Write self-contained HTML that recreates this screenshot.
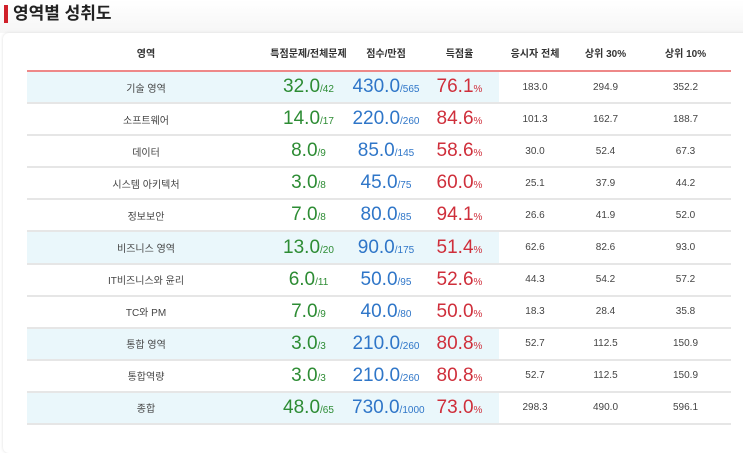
<!DOCTYPE html>
<html><head><meta charset="utf-8"><style>
body{margin:0;width:743px;height:433px;overflow:hidden;background:#fff;font-family:"Liberation Sans","Noto Sans CJK KR",sans-serif;}
.bar{position:absolute;left:4px;top:5px;width:4px;height:18px;background:#d0202a;}
.title{position:absolute;left:13px;top:3px;font-size:17px;font-weight:bold;color:#222;line-height:22px;}
.top{position:absolute;left:0;top:0;width:743px;height:33px;background:linear-gradient(#fff,#f6f6f6);}
.card{position:absolute;left:3px;top:33px;width:750px;height:420px;background:#fff;border-radius:6px;box-shadow:0 0 3px #ddd;}
table{position:absolute;left:27px;top:34px;border-collapse:collapse;table-layout:fixed;width:704px;}
th{height:36px;padding:0;font-size:10px;color:#333;font-weight:bold;border-bottom:2px solid #e88;}
td{height:30.1px;border-bottom:2px solid #e6e6e6;text-align:center;font-size:10px;color:#444;padding:0;}
tr.h td.a{background:#eaf7fb;}
.g{color:#2d8c34;font-size:19px}.b{color:#2f76c8;font-size:19px}.r{color:#cf2f3b;font-size:19px}
small{font-size:10px}
</style></head><body>
<div class="top"></div>
<div class="card"></div>
<div class="bar"></div><div class="title">영역별 성취도</div>
<table>
<colgroup><col style="width:238px"><col style="width:87px"><col style="width:68px"><col style="width:79px"><col style="width:72px"><col style="width:69px"><col style="width:91px"></colgroup>
<tr><th>영역</th><th>특점문제/전체문제</th><th>점수/만점</th><th>득점율</th><th>응시자 전체</th><th>상위 30%</th><th>상위 10%</th></tr>
<tr class="h"><td class="a">기술 영역</td><td class="a"><span class="g">32.0</span><small class="g" style="font-size:10px">/42</small></td><td class="a"><span class="b">430.0</span><small class="b" style="font-size:10px">/565</small></td><td class="a"><span class="r">76.1</span><small class="r" style="font-size:10px">%</small></td><td>183.0</td><td>294.9</td><td>352.2</td></tr>
<tr><td>소프트웨어</td><td><span class="g">14.0</span><small class="g" style="font-size:10px">/17</small></td><td><span class="b">220.0</span><small class="b" style="font-size:10px">/260</small></td><td><span class="r">84.6</span><small class="r" style="font-size:10px">%</small></td><td>101.3</td><td>162.7</td><td>188.7</td></tr>
<tr><td>데이터</td><td><span class="g">8.0</span><small class="g" style="font-size:10px">/9</small></td><td><span class="b">85.0</span><small class="b" style="font-size:10px">/145</small></td><td><span class="r">58.6</span><small class="r" style="font-size:10px">%</small></td><td>30.0</td><td>52.4</td><td>67.3</td></tr>
<tr><td>시스템 아키텍처</td><td><span class="g">3.0</span><small class="g" style="font-size:10px">/8</small></td><td><span class="b">45.0</span><small class="b" style="font-size:10px">/75</small></td><td><span class="r">60.0</span><small class="r" style="font-size:10px">%</small></td><td>25.1</td><td>37.9</td><td>44.2</td></tr>
<tr><td>정보보안</td><td><span class="g">7.0</span><small class="g" style="font-size:10px">/8</small></td><td><span class="b">80.0</span><small class="b" style="font-size:10px">/85</small></td><td><span class="r">94.1</span><small class="r" style="font-size:10px">%</small></td><td>26.6</td><td>41.9</td><td>52.0</td></tr>
<tr class="h"><td class="a">비즈니스 영역</td><td class="a"><span class="g">13.0</span><small class="g" style="font-size:10px">/20</small></td><td class="a"><span class="b">90.0</span><small class="b" style="font-size:10px">/175</small></td><td class="a"><span class="r">51.4</span><small class="r" style="font-size:10px">%</small></td><td>62.6</td><td>82.6</td><td>93.0</td></tr>
<tr><td>IT비즈니스와 윤리</td><td><span class="g">6.0</span><small class="g" style="font-size:10px">/11</small></td><td><span class="b">50.0</span><small class="b" style="font-size:10px">/95</small></td><td><span class="r">52.6</span><small class="r" style="font-size:10px">%</small></td><td>44.3</td><td>54.2</td><td>57.2</td></tr>
<tr><td>TC와 PM</td><td><span class="g">7.0</span><small class="g" style="font-size:10px">/9</small></td><td><span class="b">40.0</span><small class="b" style="font-size:10px">/80</small></td><td><span class="r">50.0</span><small class="r" style="font-size:10px">%</small></td><td>18.3</td><td>28.4</td><td>35.8</td></tr>
<tr class="h"><td class="a">통합 영역</td><td class="a"><span class="g">3.0</span><small class="g" style="font-size:10px">/3</small></td><td class="a"><span class="b">210.0</span><small class="b" style="font-size:10px">/260</small></td><td class="a"><span class="r">80.8</span><small class="r" style="font-size:10px">%</small></td><td>52.7</td><td>112.5</td><td>150.9</td></tr>
<tr><td>통합역량</td><td><span class="g">3.0</span><small class="g" style="font-size:10px">/3</small></td><td><span class="b">210.0</span><small class="b" style="font-size:10px">/260</small></td><td><span class="r">80.8</span><small class="r" style="font-size:10px">%</small></td><td>52.7</td><td>112.5</td><td>150.9</td></tr>
<tr class="h"><td class="a">종합</td><td class="a"><span class="g">48.0</span><small class="g" style="font-size:10px">/65</small></td><td class="a"><span class="b">730.0</span><small class="b" style="font-size:10px">/1000</small></td><td class="a"><span class="r">73.0</span><small class="r" style="font-size:10px">%</small></td><td>298.3</td><td>490.0</td><td>596.1</td></tr>
</table>
</body></html>
